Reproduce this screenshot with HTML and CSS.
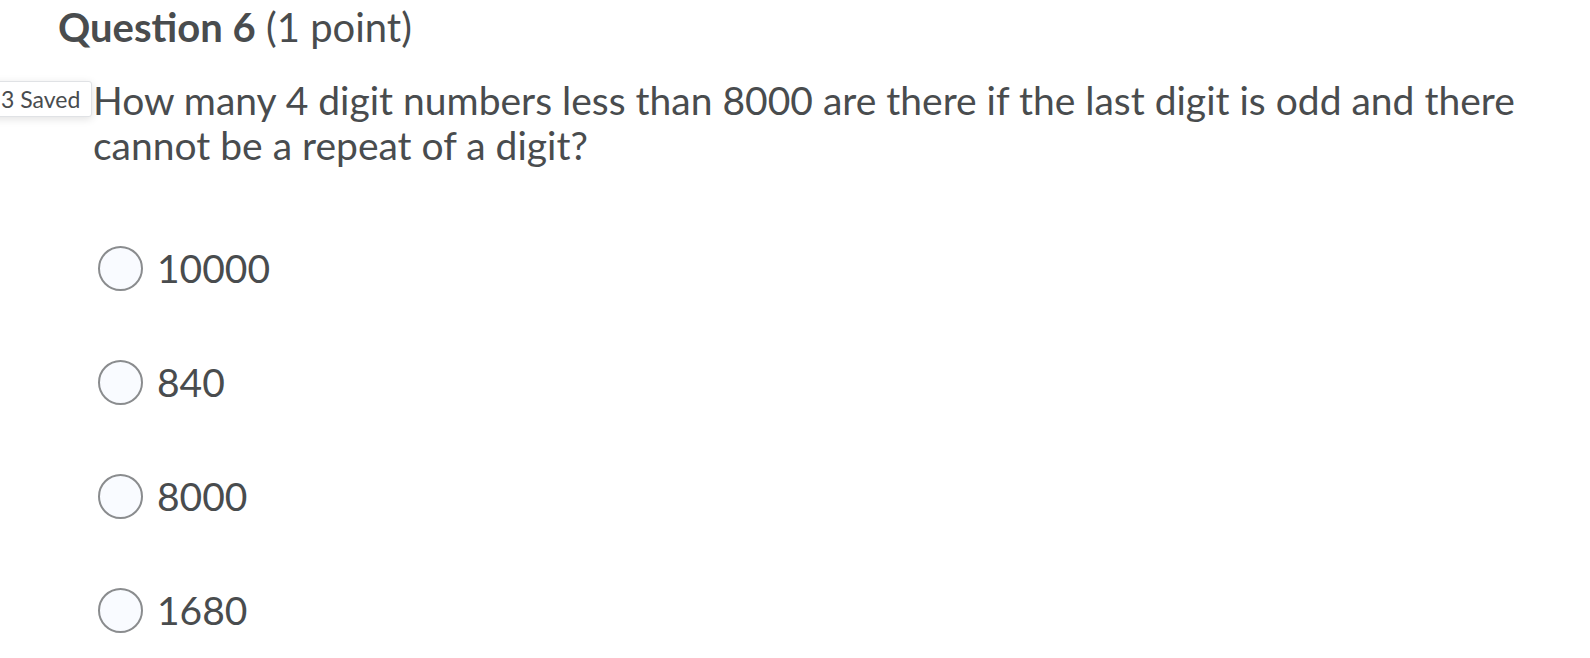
FILE: index.html
```html
<!DOCTYPE html>
<html lang="en">
<head>
  <meta charset="UTF-8">
  <title>Question 6</title>
  <link rel="stylesheet" href="styles.css">
</head>
<body>

  <div class="question">
    <h2 class="question-title"><strong>Question 6</strong> (1 point)</h2>

    <div class="question-body">
      <div class="saved-badge">3 Saved</div>
      <p class="question-text">How many 4 digit numbers less than 8000 are there if the last digit is odd and there cannot be a repeat of a digit?</p>
    </div>

    <div class="answers">
      <label class="answer"><input type="radio" name="q6" value="10000"> 10000</label>
      <label class="answer"><input type="radio" name="q6" value="840"> 840</label>
      <label class="answer"><input type="radio" name="q6" value="8000"> 8000</label>
      <label class="answer"><input type="radio" name="q6" value="1680"> 1680</label>
    </div>
  </div>

</body>
</html>
```

FILE: styles.css
```css
body {
  margin: 0;
  font-family: Lato, "Open Sans", sans-serif;
  color: #494c4e;
  background: #fff;
  overflow: hidden;
}

.question {
  padding: 0 0 0 58px;
}

.question-title {
  margin: 0;
  padding-top: 3px;
  font-size: 40px;
  font-weight: normal;
  line-height: 48px;
}

.question-title strong {
  font-weight: bold;
}

.question-body {
  position: relative;
  margin-top: 27px;
  padding-left: 35px;
}

/* badge is partly pushed off the left edge, as in the quiz sidebar */
.saved-badge {
  position: absolute;
  left: -68px;
  top: 3px;
  box-sizing: border-box;
  height: 36px;
  line-height: 34px;
  padding: 0 11px 0 10px;
  font-size: 23px;
  white-space: nowrap;
  background: #fff;
  border: 1px solid #e0e2e5;
  border-radius: 3px;
  box-shadow: 0 2px 8px rgba(0, 0, 0, 0.12);
}

.question-text {
  margin: 0;
  font-size: 39px;
  line-height: 45px;
  max-width: 1440px;
}

.answers {
  margin-top: 43px;
  padding-left: 40px;
}

.answer {
  display: flex;
  align-items: center;
  gap: 14px;
  height: 114px;
  font-size: 39px;
}

.answer input {
  appearance: none;
  box-sizing: border-box;
  margin: 0;
  width: 45px;
  height: 45px;
  border: 2px solid #8a8c8e;
  border-radius: 50%;
  background: #f9fbff;
}
```
